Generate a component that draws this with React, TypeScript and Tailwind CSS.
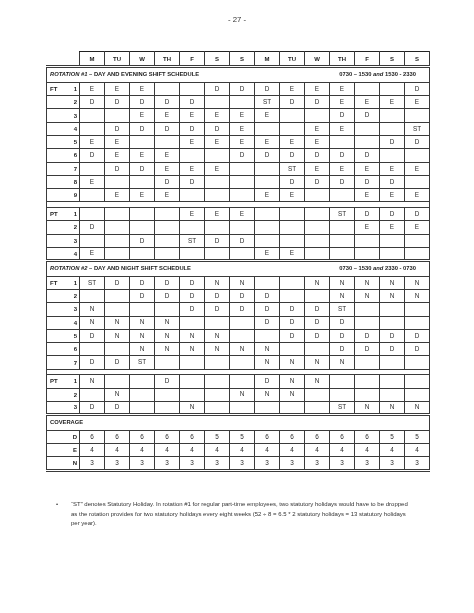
const days = ["M", "TU", "W", "TH", "F", "S", "S", "M", "TU", "W", "TH", "F", "S", "S"];

type Row = { group?: string; label: string; cells: string };

const cells = (s: string) => s.split(" ").map((c) => (c === "_" ? "" : c));

const rot1Ft: Row[] = [
  { group: "FT", label: "1", cells: "E E E _ _ D D D E E E _ _ D" },
  { label: "2", cells: "D D D D D _ _ ST D D E E E E" },
  { label: "3", cells: "_ _ E E E E E E _ _ D D _ _" },
  { label: "4", cells: "_ D D D D D E _ _ E E _ _ ST" },
  { label: "5", cells: "E E _ _ E E E E E E _ _ D D" },
  { label: "6", cells: "D E E E _ _ D D D D D D _ _" },
  { label: "7", cells: "_ D D E E E _ _ ST E E E E E" },
  { label: "8", cells: "E _ _ D D _ _ _ D D D D D _" },
  { label: "9", cells: "_ E E E _ _ _ E E _ _ E E E" },
];

const rot1Pt: Row[] = [
  { group: "PT", label: "1", cells: "_ _ _ _ E E E _ _ _ ST D D D" },
  { label: "2", cells: "D _ _ _ _ _ _ _ _ _ _ E E E" },
  { label: "3", cells: "_ _ D _ ST D D _ _ _ _ _ _ _" },
  { label: "4", cells: "E _ _ _ _ _ _ E E _ _ _ _ _" },
];

const rot2Ft: Row[] = [
  { group: "FT", label: "1", cells: "ST D D D D N N _ _ N N N N N" },
  { label: "2", cells: "_ _ D D D D D D _ _ N N N N" },
  { label: "3", cells: "N _ _ _ D D D D D D ST _ _ _" },
  { label: "4", cells: "N N N N _ _ _ D D D D _ _ _" },
  { label: "5", cells: "D N N N N N _ _ D D D D D D" },
  { label: "6", cells: "_ _ N N N N N N _ _ D D D D" },
  { label: "7", cells: "D D ST _ _ _ _ N N N N _ _ _" },
];

const rot2Pt: Row[] = [
  { group: "PT", label: "1", cells: "N _ _ D _ _ _ D N N _ _ _ _" },
  { label: "2", cells: "_ N _ _ _ _ N N N _ _ _ _ _" },
  { label: "3", cells: "D D _ _ N _ _ _ _ _ ST N N N" },
];

const coverage: Row[] = [
  { label: "D", cells: "6 6 6 6 6 5 5 6 6 6 6 6 5 5" },
  { label: "E", cells: "4 4 4 4 4 4 4 4 4 4 4 4 4 4" },
  { label: "N", cells: "3 3 3 3 3 3 3 3 3 3 3 3 3 3" },
];

const line = "border border-[#3a3a3a]";
const dbl = "border-t-[3px] border-t-[#3a3a3a] border-double";

function DataRow({ row }: { row: Row }) {
  return (
    <tr className="h-[13.3px]">
      <td className={`${line} p-0 pl-[3px] pr-[2px] font-bold text-[6px] text-[#1a1a1a]`}>
        <div className="flex justify-between">
          <span>{row.group ?? ""}</span>
          <span>{row.label}</span>
        </div>
      </td>
      {cells(row.cells).map((c, i) => (
        <td key={i} className={`${line} p-0 text-center text-[6.4px] text-[#2a2a2a]`}>
          {c}
        </td>
      ))}
    </tr>
  );
}

function Spacer() {
  return (
    <tr className="h-[5.5px]">
      <td colSpan={15} className={`${line} p-0`} />
    </tr>
  );
}

function Rotation({ title, rest, hours }: { title: string; rest: string; hours: [string, string] }) {
  return (
    <tr className="h-[15.5px]">
      <td colSpan={15} className={`${line} ${dbl} p-0 pl-[3px] pr-[13px] text-[5.8px] font-bold text-[#1a1a1a]`}>
        <div className="flex justify-between">
          <span>
            <i>{title}</i> {rest}
          </span>
          <span>
            {hours[0]} <i>and</i> {hours[1]}
          </span>
        </div>
      </td>
    </tr>
  );
}

export default function App() {
  return (
    <div className="w-[474px] h-[613px] font-['Liberation_Sans',Arial,sans-serif] leading-none will-change-transform">
      <div className="pt-[16px] text-center text-[7.8px] text-[#333]">- 27 -</div>

      <table className="ml-[46px] mt-[27px] w-[383px] table-fixed border-collapse">
        <colgroup>
          <col className="w-[33px]" />
          {days.map((_, i) => (
            <col key={i} className="w-[25px]" />
          ))}
        </colgroup>
        <tbody>
          <tr className="h-[15.5px]">
            <td className="p-0" />
            {days.map((d, i) => (
              <td
                key={i}
                className={`${line} border-t-[#222] p-0 text-center text-[6px] font-bold text-[#1a1a1a]`}
              >
                {d}
              </td>
            ))}
          </tr>
          <Rotation
            title="ROTATION #1"
            rest="– DAY AND EVENING SHIFT SCHEDULE"
            hours={["0730 – 1530", "1530 - 2330"]}
          />
          {rot1Ft.map((r, i) => (
            <DataRow key={`a${i}`} row={r} />
          ))}
          <Spacer />
          {rot1Pt.map((r, i) => (
            <DataRow key={`b${i}`} row={r} />
          ))}
          <Rotation
            title="ROTATION #2"
            rest="– DAY AND NIGHT SHIFT SCHEDULE"
            hours={["0730 – 1530", "2330 - 0730"]}
          />
          {rot2Ft.map((r, i) => (
            <DataRow key={`c${i}`} row={r} />
          ))}
          <Spacer />
          {rot2Pt.map((r, i) => (
            <DataRow key={`d${i}`} row={r} />
          ))}
          <tr className="h-[15.5px]">
            <td colSpan={15} className={`${line} ${dbl} p-0 pl-[3px] text-[5.8px] font-bold text-[#1a1a1a]`}>
              COVERAGE
            </td>
          </tr>
          {coverage.map((r, i) => (
            <DataRow key={`e${i}`} row={r} />
          ))}
          <tr className="h-[3px]">
            <td colSpan={15} className={`p-0 ${dbl}`} />
          </tr>
        </tbody>
      </table>

      <div className="mt-[27px] flex pl-[56px] text-[6px] leading-[9.5px] text-[#333]">
        <span className="w-[15px] shrink-0">•</span>
        <p className="w-[342px]">
          “ST” denotes Statutory Holiday. In rotation #1 for regular part-time employees, two statutory holidays would
          have to be dropped as the rotation provides for two statutory holidays every eight weeks (52 ÷ 8 = 6.5 * 2
          statutory holidays = 13 statutory holidays per year).
        </p>
      </div>
    </div>
  );
}
